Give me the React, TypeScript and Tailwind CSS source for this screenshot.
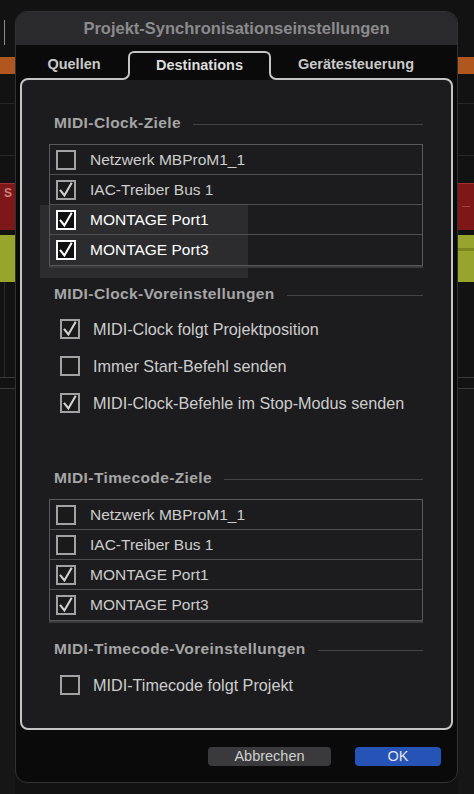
import React from "react";

const FONT = { fontFamily: '"Liberation Sans", Arial, sans-serif' };

function Box({ checked, bright }: { checked: boolean; bright?: boolean }) {
  const border = bright ? "border-white bg-[#101010]" : "border-[#a2a2a2] bg-[#1a1a1b]";
  const stroke = bright ? "#ffffff" : "#d2d2d2";
  return (
    <div className={`w-[20px] h-[20px] border-2 ${border} flex items-center justify-center shrink-0`}>
      {checked && (
        <svg width="16" height="16" viewBox="0 0 16 16">
          <path d="M2.6 8.6 L6.4 13.4 L13.2 1.6" fill="none" stroke={stroke} strokeWidth="2.1" strokeLinecap="square" />
        </svg>
      )}
    </div>
  );
}

function Heading({ text }: { text: string }) {
  return (
    <div className="flex items-center h-[20px] pl-[5px] gap-[12px]">
      <span className="text-[15.5px] font-bold text-[#a6a6a6] tracking-[0.4px] whitespace-nowrap">{text}</span>
      <div className="flex-1 h-px bg-[#444446] mt-[2px]" />
    </div>
  );
}

type Row = { label: string; checked: boolean; bright?: boolean };

function ListBox({ rows }: { rows: Row[] }) {
  return (
    <div className="relative z-10 border border-[#58585a] shadow-[0_2px_0_#3a3a3c]">
      {rows.map((r, i) => (
        <div
          key={r.label}
          className={`h-[30px] flex items-center pl-[6px] gap-[14px] ${i < rows.length - 1 ? "border-b border-[#4e4e50]" : ""}`}
        >
          <Box checked={r.checked} bright={r.bright} />
          <span className={`text-[15.5px] ${r.bright ? "text-white" : "text-[#cdcdcd]"}`}>{r.label}</span>
        </div>
      ))}
    </div>
  );
}

function Option({ label, checked }: { label: string; checked: boolean }) {
  return (
    <div className="h-[24px] flex items-center pl-[11px] gap-[13px]">
      <Box checked={checked} />
      <span className="text-[16.2px] text-[#cdcdcd]">{label}</span>
    </div>
  );
}

function SideStrip({ left }: { left?: boolean }) {
  return (
    <div className="flex-1 flex flex-col">
      <div className="h-[20px]" />
      <div className="h-[25px] flex">
        {left && <div className="ml-[4px] w-px bg-[#8a8a8a]" />}
      </div>
      <div className="h-[12px]" />
      <div className="h-[17px] bg-[#b0571f]" />
      <div className="h-[29px]" />
      <div className="h-px bg-[#262628]" />
      <div className="h-[51px]" />
      <div className="h-px bg-[#262628]" />
      <div className="h-[27px]" />
      <div className="h-[47px] bg-[#7e1818] border-t border-[#a03030] flex flex-col">
        {left ? (
          <span className="text-[12px] font-bold text-[#d08080] pl-[4px] pt-[3px] leading-none">S</span>
        ) : (
          <div className="mt-[22px] mx-[4px] h-px bg-[#b04040]" />
        )}
      </div>
      <div className="h-[5px]" />
      <div className="h-[47px] bg-[#98a52c] flex flex-col">
        {!left && <div className="mt-[13px] h-[3px] bg-[#7c8722]" />}
      </div>
      <div className="flex-1 flex flex-col">
        <div className="h-[95px] flex">{left && <div className="ml-[4px] w-px bg-[#2a2a2c]" />}</div>
        <div className="h-px bg-[#3a3a3c]" />
        <div className="h-[10px]" />
        <div className="h-px bg-[#3a3a3c]" />
        <div className="flex-1 bg-[#161617]" />
      </div>
    </div>
  );
}

export default function App() {
  const clockTargets: Row[] = [
    { label: "Netzwerk MBProM1_1", checked: false },
    { label: "IAC-Treiber Bus 1", checked: true },
    { label: "MONTAGE Port1", checked: true, bright: true },
    { label: "MONTAGE Port3", checked: true, bright: true },
  ];
  const timecodeTargets: Row[] = [
    { label: "Netzwerk MBProM1_1", checked: false },
    { label: "IAC-Treiber Bus 1", checked: false },
    { label: "MONTAGE Port1", checked: true },
    { label: "MONTAGE Port3", checked: true },
  ];

  return (
    <div className="w-[474px] h-[794px] bg-[#121213] flex overflow-hidden" style={FONT}>
      <div className="w-[15px] flex">
        <SideStrip left />
      </div>

      {/* dialog window */}
      <div className="mt-[11px] w-[443px] h-[772px] rounded-[12px] border border-[#323234] bg-[#0a0a0a] overflow-hidden flex flex-col shrink-0">
        <div className="h-[33px] bg-[#2a2a2c] flex items-center justify-center">
          <span className="text-[16.5px] font-bold text-[#8a8a8c]">Projekt-Synchronisationseinstellungen</span>
        </div>

        {/* tabs */}
        <div className="flex items-end pt-[6px] px-[4px] h-[33px]">
          <div className="w-[108px] h-[27px] flex items-center justify-center text-[14.5px] font-bold text-[#c9c9c9]">
            Quellen
          </div>
          <div className="relative z-20 w-[143px] h-[29px] -mb-[2px] border-2 border-b-0 border-[#c4c4c4] rounded-t-[6px] bg-[#0a0a0a] flex items-center justify-center pb-[2px] text-[14.5px] font-bold text-[#dedede]">
            Destinations
            {/* flared lower corners joining the panel outline */}
            <div className="absolute -left-[10px] bottom-0 w-[10px] h-[9px] bg-[#0a0a0a]">
              <div className="w-full h-full border-r-2 border-b-2 border-[#c4c4c4] rounded-br-[7px]" />
            </div>
            <div className="absolute -right-[10px] bottom-0 w-[10px] h-[9px] bg-[#0a0a0a]">
              <div className="w-full h-full border-l-2 border-b-2 border-[#c4c4c4] rounded-bl-[7px]" />
            </div>
          </div>
          <div className="w-[170px] h-[27px] flex items-center justify-center text-[14.5px] font-bold text-[#c9c9c9]">
            Gerätesteuerung
          </div>
        </div>

        {/* content panel */}
        <div className="relative mx-[4px] h-[652px] border-2 border-[#c4c4c4] rounded-[8px] bg-[#1c1c1e] pl-[27px] pr-[28px] pt-[33px] flex flex-col">
          {/* drag selection ghost over two rows */}
          <div className="absolute left-[18px] top-[125px] w-[208px] h-[73px] bg-white/[0.07] z-0" />

          <Heading text="MIDI-Clock-Ziele" />
          <div className="mt-[11px]">
            <ListBox rows={clockTargets} />
          </div>

          <div className="mt-[18px]">
            <Heading text="MIDI-Clock-Voreinstellungen" />
          </div>
          <div className="mt-[13px] flex flex-col gap-[13px]">
            <Option label="MIDI-Clock folgt Projektposition" checked />
            <Option label="Immer Start-Befehl senden" checked={false} />
            <Option label="MIDI-Clock-Befehle im Stop-Modus senden" checked />
          </div>

          <div className="mt-[53px]">
            <Heading text="MIDI-Timecode-Ziele" />
          </div>
          <div className="mt-[11px]">
            <ListBox rows={timecodeTargets} />
          </div>

          <div className="mt-[18px]">
            <Heading text="MIDI-Timecode-Voreinstellungen" />
          </div>
          <div className="mt-[14px]">
            <Option label="MIDI-Timecode folgt Projekt" checked={false} />
          </div>
        </div>

        {/* buttons */}
        <div className="flex justify-end items-start gap-[24px] pt-[17px] pr-[16px]">
          <button className="w-[123px] h-[19px] rounded-[4px] bg-[#3a3a3c] text-[14.5px] text-[#cfcfcf] leading-none">
            Abbrechen
          </button>
          <button className="w-[86px] h-[19px] rounded-[4px] bg-[#2553b6] text-[14.5px] text-[#e4e4e4] leading-none">
            OK
          </button>
        </div>
      </div>

      <div className="flex-1 flex">
        <SideStrip />
      </div>
    </div>
  );
}
